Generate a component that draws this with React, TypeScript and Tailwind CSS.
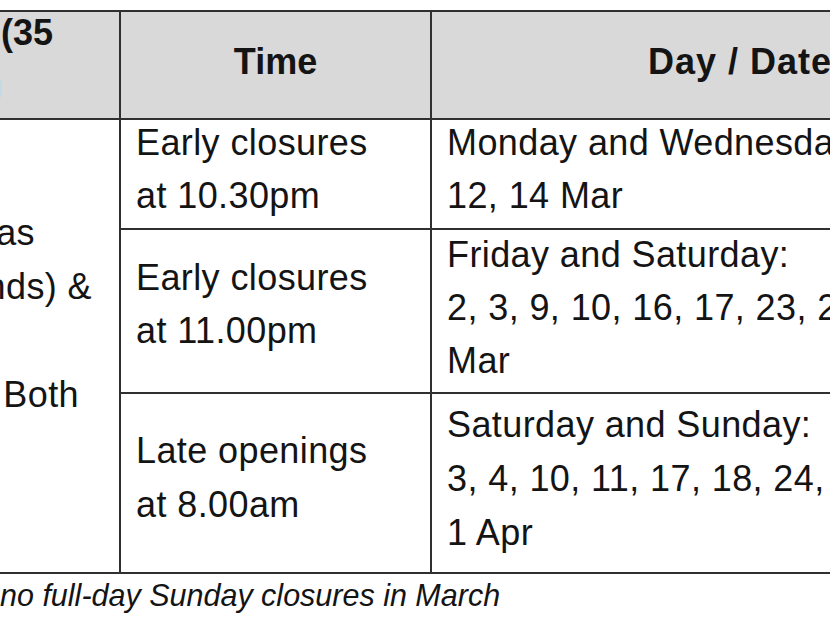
import type React from "react";

interface ScheduleRow {
  time: string[];
  dates: string[];
  height: string;
  timePad: string;
  datePad: string;
  leading: string;
}

// Rows of the timetable; line breaks follow the printed table
const rows: ScheduleRow[] = [
  {
    time: ["Early closures", "at 10.30pm"],
    dates: ["Monday and Wednesday:", "12, 14 Mar"],
    height: "h-[110px]",
    timePad: "-mt-[4px]",
    datePad: "-mt-[4px]",
    leading: "leading-[53px]",
  },
  {
    time: ["Early closures", "at 11.00pm"],
    dates: ["Friday and Saturday:", "2, 3, 9, 10, 16, 17, 23, 24, 30, 31", "Mar"],
    height: "h-[164px]",
    timePad: "mt-[21px]",
    datePad: "-mt-[2px]",
    leading: "leading-[53px]",
  },
  {
    time: ["Late openings", "at 8.00am"],
    dates: ["Saturday and Sunday:", "3, 4, 10, 11, 17, 18, 24, 25, 31 Mar,", "1 Apr"],
    height: "h-[180px]",
    timePad: "mt-[30px]",
    datePad: "mt-[4px]",
    leading: "leading-[54px]",
  },
];

const App: React.FC = () => {
  return (
    <div className="w-[830px] h-[622px] overflow-hidden bg-white text-[#141414] font-['Liberation_Sans',Arial,sans-serif]">
      {/* Table (first column runs off the left edge) */}
      <div className="mt-[10px] -ml-[280px] w-[1324px] border-t-2 border-[#303030]">
        {/* Header */}
        <div className="flex h-[108px] border-b-2 border-[#303030] bg-[#d9d9d9] text-[36px] font-bold leading-[53px]">
          <div className="w-[401px] shrink-0 border-r-2 border-[#303030] flex flex-col justify-center items-end pb-[12px]">
            <div className="whitespace-nowrap mr-[66px]">Tanah Merah – Pasir Ris (35</div>
            <div className="whitespace-nowrap mr-[116px] text-[#c3d9ea]">stations)</div>
          </div>
          <div className="w-[311px] shrink-0 border-r-2 border-[#303030] flex items-center justify-center pb-[8px]">
            Time
          </div>
          <div className="w-[612px] shrink-0 flex items-center pl-[216px] pb-[8px] tracking-[1px] whitespace-nowrap">
            Day / Date
          </div>
        </div>

        {/* Body */}
        <div className="flex text-[36px] tracking-[0.4px]">
          {/* Affected section, spans all rows */}
          <div className="w-[401px] shrink-0 border-r-2 border-b-2 border-[#303030] pt-[86px] leading-[54px] flex flex-col items-end">
            <div className="whitespace-nowrap mr-[84px]">All East-West Line areas</div>
            <div className="whitespace-nowrap mr-[27px]">(on weekends) &amp;</div>
            <div className="whitespace-nowrap mr-[124px]">Changi Airport</div>
            <div className="whitespace-nowrap mr-[40px]">branch line. Both</div>
            <div className="whitespace-nowrap mr-[124px]">directions</div>
          </div>

          <div className="flex flex-col w-[923px] shrink-0">
            {rows.map((row, idx) => (
              <div
                key={`row-${idx}`}
                className={`flex ${row.height} border-b-2 border-[#303030]`}
              >
                <div className="w-[311px] shrink-0 border-r-2 border-[#303030] pl-[15px]">
                  <div className={`${row.timePad} ${row.leading}`}>
                    {row.time.map((line) => (
                      <div key={line} className="whitespace-nowrap">
                        {line}
                      </div>
                    ))}
                  </div>
                </div>
                <div className="w-[612px] shrink-0 pl-[15px]">
                  <div className={`${row.datePad} ${row.leading}`}>
                    {row.dates.map((line) => (
                      <div key={line} className="whitespace-nowrap">
                        {line}
                      </div>
                    ))}
                  </div>
                </div>
              </div>
            ))}
          </div>
        </div>
      </div>

      {/* Footnote */}
      <div className="pt-[4px] text-[30.5px] italic leading-[1.15] whitespace-nowrap">
        no full-day Sunday closures in March
      </div>
    </div>
  );
};

export default App;
